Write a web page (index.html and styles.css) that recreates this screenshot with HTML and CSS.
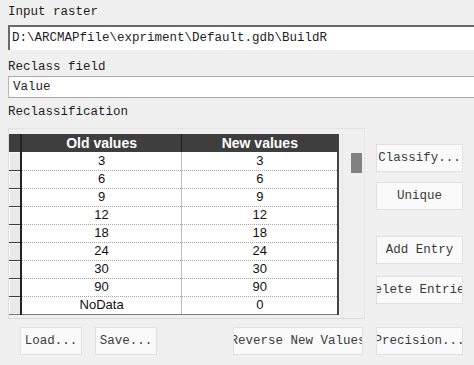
FILE: index.html
```
<!DOCTYPE html>
<html lang="en">

<head>
    <meta charset="UTF-8">
    <title>Reclassify</title>
    <link rel="stylesheet" href="styles.css">
</head>

<body>
    <div class="dialog">
        <div class="label label-first">Input raster</div>
        <div class="input input-path">D:\ARCMAPfile\expriment\Default.gdb\BuildR</div>

        <div class="label label-field">Reclass field</div>
        <div class="input input-field">Value</div>

        <div class="label label-table">Reclassification</div>

        <div class="main">
            <div class="frame">
                <table class="grid">
                    <thead>
                        <tr>
                            <th class="rowhead"></th>
                            <th class="col-old">Old values</th>
                            <th class="col-new">New values</th>
                        </tr>
                    </thead>
                    <tbody>
                        <tr><td class="rowhead"></td><td>3</td><td>3</td></tr>
                        <tr><td class="rowhead"></td><td>6</td><td>6</td></tr>
                        <tr><td class="rowhead"></td><td>9</td><td>9</td></tr>
                        <tr><td class="rowhead"></td><td>12</td><td>12</td></tr>
                        <tr><td class="rowhead"></td><td>18</td><td>18</td></tr>
                        <tr><td class="rowhead"></td><td>24</td><td>24</td></tr>
                        <tr><td class="rowhead"></td><td>30</td><td>30</td></tr>
                        <tr><td class="rowhead"></td><td>90</td><td>90</td></tr>
                        <tr><td class="rowhead"></td><td>NoData</td><td>0</td></tr>
                    </tbody>
                </table>
                <div class="scroll">
                    <div class="thumb"></div>
                </div>
            </div>

            <div class="side">
                <div class="btn btn-classify">Classify...</div>
                <div class="btn btn-unique">Unique</div>
                <div class="btn btn-add">Add Entry</div>
                <div class="btn btn-delete">Delete Entries</div>
            </div>
        </div>

        <div class="bottom">
            <div class="btn btn-load">Load...</div>
            <div class="btn btn-save">Save...</div>
            <div class="btn btn-reverse">Reverse New Values</div>
            <div class="btn btn-precision">Precision...</div>
        </div>
    </div>
</body>

</html>
```

FILE: styles.css
```
* {
    margin: 0;
    padding: 0;
    box-sizing: border-box;
}

body {
    background: #f0f0f0;
    font-family: 'Liberation Mono', 'Noto Sans CJK SC', monospace;
    font-size: 12px;
    color: #1e1e1e;
    overflow: hidden;
    width: 474px;
    height: 365px;
}

.dialog {
    width: 474px;
    height: 365px;
    overflow: hidden;
}

.label {
    height: 20px;
    line-height: 20px;
    padding-left: 8px;
    font-size: 12.5px;
}

.label-first {
    margin-top: 1px;
    height: 24px;
    line-height: 22px;
}

.label-field {
    margin-top: 6px;
    line-height: 22px;
}

.label-table {
    margin-top: 3px;
    line-height: 22px;
}

.input {
    margin-left: 8px;
    width: 480px;
    background: #ffffff;
    font-size: 12.5px;
}

.input-path {
    height: 25px;
    line-height: 22px;
    border-top: 2px solid #6b6b6b;
    border-left: 2px solid #6b6b6b;
    padding-left: 2px;
}

.input-field {
    height: 22px;
    line-height: 21px;
    border-top: 1px solid #a8a8a8;
    border-bottom: 1px solid #a8a8a8;
    border-left: 1px solid #b8b8b8;
    padding-left: 4px;
}

.main {
    display: flex;
    margin-top: 7px;
}

.frame {
    display: flex;
    width: 357px;
    height: 191px;
    margin-left: 8px;
    padding-top: 5px;
    border-top: 1px solid #e2e2e2;
    border-left: 1px solid #dedede;
    border-bottom: 1px solid #dadada;
    border-right: 1px solid #e6e6e6;
}

.grid {
    border-collapse: collapse;
    font-family: 'Liberation Sans', Arial, sans-serif;
    font-size: 13px;
    text-align: center;
    background: #ffffff;
    height: 180px;
}

.grid th {
    background: #3e3e3e;
    color: #ffffff;
    font-size: 14px;
    font-weight: bold;
    height: 18px;
    line-height: 16px;
    border-right: 1px solid #1c1c1c;
}

.grid td {
    height: 18px;
    line-height: 16px;
    border-bottom: 1px dotted #a6a6a6;
    border-right: 1px solid #bdbdbd;
    color: #111111;
}

.grid th.rowhead,
.grid td.rowhead {
    width: 12px;
    border-right: 2px solid #222222;
}

.grid td.rowhead {
    background: #e9e9e9;
    border-bottom: 1px solid #3a3a3a;
    box-shadow: inset 1px 1px 0 #fafafa;
}

.col-old {
    width: 164px;
}

.col-new {
    width: 159px;
}

.grid th.col-new,
.grid td:last-child {
    border-right: 2px solid #444444;
}

.grid tbody tr:last-child td {
    border-bottom: 1px solid #7a7a7a;
}

.scroll {
    width: 22px;
    padding-left: 8px;
    padding-top: 19px;
    border-left: 1px solid #e6e6e6;
    margin-left: 3px;
}

.thumb {
    width: 11px;
    height: 20px;
    background: #828282;
}

.btn {
    display: flex;
    justify-content: center;
    align-items: center;
    height: 28px;
    background: #fafafa;
    border: 1px solid #e1e1e1;
    color: #3a3a3a;
    font-size: 12.5px;
    white-space: nowrap;
    overflow: hidden;
}

.side {
    display: flex;
    flex-direction: column;
    margin-left: 11px;
    width: 87px;
    padding-top: 16px;
}

.btn-unique {
    margin-top: 10px;
}

.btn-add {
    margin-top: 26px;
}

.btn-delete {
    margin-top: 12px;
}

.bottom {
    display: flex;
    margin-top: 8px;
}

.btn-load {
    margin-left: 20px;
    width: 62px;
}

.btn-save {
    margin-left: 13px;
    width: 62px;
}

.btn-reverse {
    margin-left: 76px;
    width: 130px;
}

.btn-precision {
    margin-left: 13px;
    width: 87px;
}
```
